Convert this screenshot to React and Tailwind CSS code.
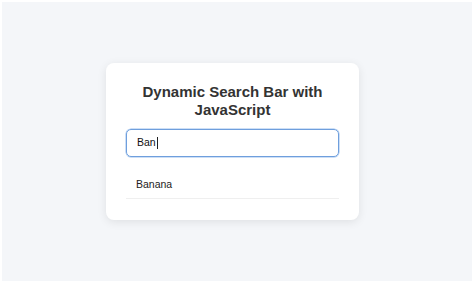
import React from "react";

const results = ["Banana"];

export default function App() {
  return (
    <div className="w-[474px] h-[283px] bg-white p-[2px]" style={{ fontFamily: '"Liberation Sans", Arial, sans-serif' }}>
      <div className="w-full h-full bg-[#f4f6f9] flex items-center justify-center pr-[9px]">
        <div className="w-[253px] bg-white rounded-[8px] shadow-[0_2px_10px_rgba(0,0,0,0.09)] px-[20px] pt-[20px] pb-[21px]">
          <h1 className="text-[15px] leading-[18px] font-bold text-[#333] text-center mb-[10px]">
            Dynamic Search Bar with JavaScript
          </h1>
          <div className="h-[28px] w-full border border-[#6f9fdd] rounded-[5px] flex items-center px-[10px] shadow-[0_0_0_0.5px_#9cc0ee]">
            <span className="text-[10.5px] text-[#111]">Ban</span>
            <span className="w-px h-[12px] bg-[#222] ml-[1px]" />
          </div>
          <ul className="mt-[12px]">
            {results.map((r) => (
              <li key={r} className="px-[10px] pt-[9px] pb-[8px] border-b border-[#efefef] text-[10.5px] leading-[12px] text-[#222]">
                {r}
              </li>
            ))}
          </ul>
        </div>
      </div>
    </div>
  );
}
